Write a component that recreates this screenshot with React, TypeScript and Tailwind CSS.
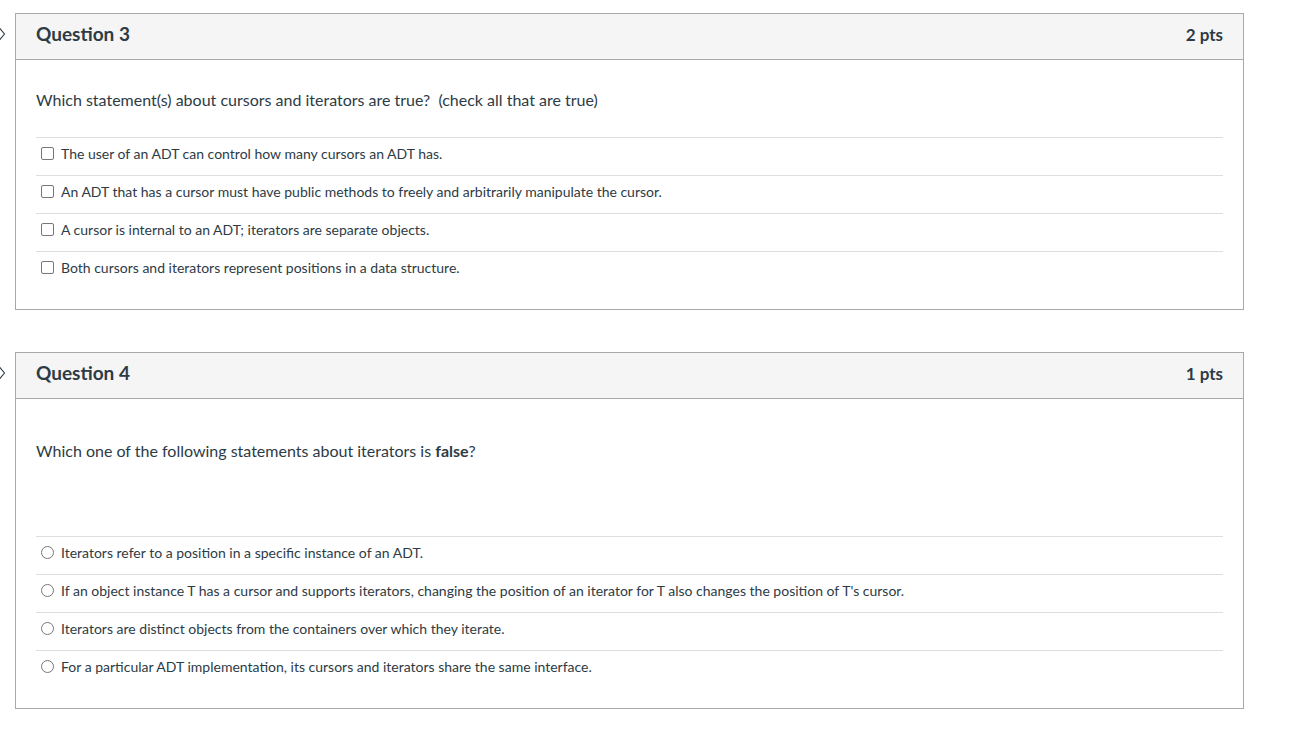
import React from 'react';

type Question = {
  title: string;
  points: string;
  kind: 'checkbox' | 'radio';
  text: React.ReactNode;
  answers: string[];
  textClass: string;
};

const questions: Question[] = [
  {
    title: 'Question 3',
    points: '2 pts',
    kind: 'checkbox',
    text: 'Which statement(s) about cursors and iterators are true?\u00a0 (check all that are true)',
    textClass: 'pt-[28px] pb-[25px]',
    answers: [
      'The user of an ADT can control how many cursors an ADT has.',
      'An ADT that has a cursor must have public methods to freely and arbitrarily manipulate the cursor.',
      'A cursor is internal to an ADT; iterators are separate objects.',
      'Both cursors and iterators represent positions in a data structure.',
    ],
  },
  {
    title: 'Question 4',
    points: '1 pts',
    kind: 'radio',
    text: (
      <>
        Which one of the following statements about iterators is <span className="font-bold">false</span>?
      </>
    ),
    textClass: 'pt-[40px] pb-[73px]',
    answers: [
      'Iterators refer to a position in a specific instance of an ADT.',
      "If an object instance T has a cursor and supports iterators, changing the position of an iterator for T also changes the position of T's cursor.",
      'Iterators are distinct objects from the containers over which they iterate.',
      'For a particular ADT implementation, its cursors and iterators share the same interface.',
    ],
  },
];

function Chevron() {
  return (
    <svg width="8" height="14" viewBox="0 0 8 14" className="absolute left-[-2px] top-[14px]">
      <path d="M1.5 1 L6.5 7 L1.5 13" fill="none" stroke="#2d3b45" strokeWidth="1.1" />
    </svg>
  );
}

function QuestionCard({ q }: { q: Question }) {
  return (
    <div className="relative">
      <Chevron />
      <div className="ml-[15px] w-[1229px] border border-[#a9a9a9] bg-white">
        <div className="flex h-[46px] items-center justify-between border-b border-[#a9a9a9] bg-[#f5f5f5] px-[20px] pb-[4px]">
          <span className="text-[19px] font-bold text-[#2d3b45]">{q.title}</span>
          <span className="text-[17px] font-bold text-[#2d3b45]">{q.points}</span>
        </div>
        <div className="px-[20px] pb-[20px]">
          <div className={`text-[16px] leading-[24px] text-[#2d3b45] ${q.textClass}`}>{q.text}</div>
          <div>
            {q.answers.map((a, i) => (
              <div key={i} className="flex h-[38px] items-center gap-[7px] border-t border-[#dcdfe1] pb-[6px] pl-[5px]">
                {q.kind === 'checkbox' ? (
                  <span className="inline-block h-[13px] w-[13px] rounded-[2px] border border-[#777] bg-white" />
                ) : (
                  <span className="inline-block h-[13px] w-[13px] rounded-full border border-[#777] bg-white" />
                )}
                <span className="text-[14px] text-[#2d3b45]">{a}</span>
              </div>
            ))}
          </div>
        </div>
      </div>
    </div>
  );
}

export default function App() {
  return (
    <div className="min-h-screen bg-white pt-[13px]" style={{ fontFamily: 'Lato, "Noto Sans", sans-serif' }}>
      <div className="flex flex-col gap-[42px]">
        {questions.map((q) => (
          <QuestionCard key={q.title} q={q} />
        ))}
      </div>
    </div>
  );
}
